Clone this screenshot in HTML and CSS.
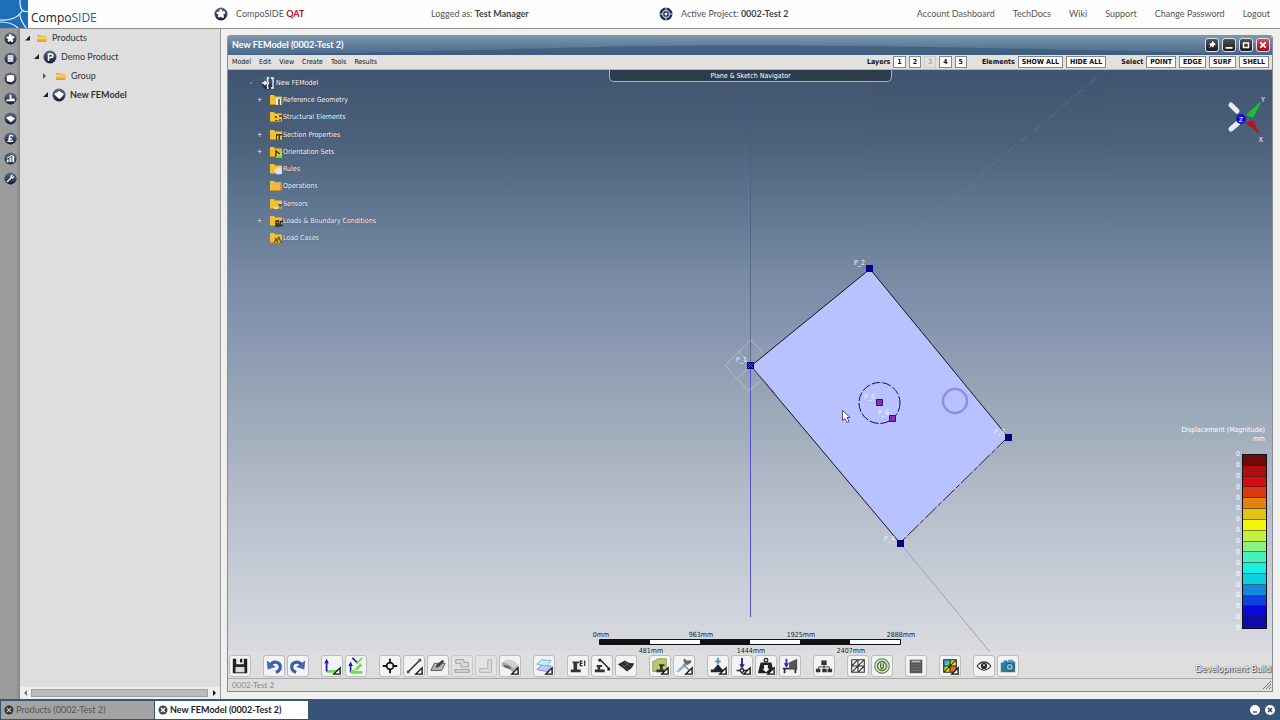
FILE: index.html
```html
<!DOCTYPE html>
<html lang="en">
<head>
<meta charset="utf-8">
<title>CompoSIDE - New FEModel (0002-Test 2)</title>
<link rel="stylesheet" href="styles.css">
</head>
<body>
<svg class="defs" aria-hidden="true">
  <defs>
    <linearGradient id="navy" x2="0" y2="1"><stop offset="0" stop-color="#5b6d8c"/><stop offset="1" stop-color="#121d38"/></linearGradient>
    <linearGradient id="gold" x2="0" y2="1"><stop offset="0" stop-color="#fbe08a"/><stop offset="1" stop-color="#d99a1c"/></linearGradient>
    <symbol id="disc" viewBox="0 0 14 14"><circle cx="7" cy="7" r="6.5" fill="url(#navy)"/></symbol>
    <symbol id="folder" viewBox="0 0 12 10"><path d="M1 2h4l1 1h4v2H1z" fill="#e8b53e"/><path d="M1 9V3.500L3 4h9l-2 5z" fill="url(#gold)"/></symbol>
    <symbol id="ffolder" viewBox="0 0 13 12"><path d="M0 1h4l1 1.500h7V11H0z" fill="#f2c12e"/><path d="M0 10h12v1H0z" fill="#c8921a"/></symbol>
    <symbol id="cross" viewBox="0 0 14 14"><circle cx="7" cy="7" r="6.500" fill="url(#navy)"/><path d="M6 2.500c1.500-.8 2.500.5 2 2 1.500-.5 3.500 0 3.200 1.500-.2 1.200-1.500 1.200-2.200 1.500 1 .8 1.500 2.500.3 3.200-1.200.7-2-.5-2.300-1.200-.8 1-2.500 1.300-3 .3-.5-1 .3-1.600 1-2.300-1.300 0-2.700-.6-2.500-1.800.3-1.300 2-1 3-.7-.3-.8-.5-2 .5-2.500z" fill="#fff"/></symbol>
  </defs>
</svg>

<header class="top">
  <div class="brand">
    <svg class="logo" viewBox="0 0 28 28" aria-hidden="true"><path fill="#1d70b7" d="M0 0h28v28H0z"/><path d="M0 20C9 21 18 18 22 11M20 0c0 5 0 8 2 10 2 2 4 2 6 1M20 15c0 5 3 8 6 13M0 22c6 0 13 1 18 6" fill="none" stroke="#e9f2fa" stroke-width="1.200"/></svg>
    <span class="wordmark">Compo<b>SIDE</b></span>
  </div>
  <div class="info"><svg class="i14" aria-hidden="true"><use href="#cross"/></svg><span>CompoSIDE <b class="red">QAT</b></span></div>
  <div class="info plain"><span>Logged as: <b>Test Manager</b></span></div>
  <div class="info project"><svg class="i14" viewBox="0 0 14 14" aria-hidden="true"><circle cx="7" cy="7" r="6.500" fill="#1b2747"/><circle cx="7" cy="7" r="3.500" fill="none" stroke="#9fb2d4" stroke-width="1.500"/><path d="M7 0v4M7 10v4M0 7h4M10 7h4" stroke="#d5dff0"/><circle cx="7" cy="7" r="1.500" fill="#fff"/></svg><span>Active Project: <b>0002-Test 2</b></span></div>
  <nav class="links"><a href="#">Account Dashboard</a><a href="#">TechDocs</a><a href="#">Wiki</a><a href="#">Support</a><a href="#">Change Password</a><a href="#">Logout</a></nav>
</header>

<main class="main">
  <nav class="rail" aria-label="Modules">
    <button aria-label="Modules"><svg viewBox="0 0 14 14"><use href="#cross"/></svg></button>
    <button aria-label="Materials"><svg viewBox="0 0 14 14"><use href="#disc"/><path d="M4 3.500h6v7H4z" fill="#fff"/><path d="M4 5.500h6M4 8.500h6" stroke="#8893aa"/></svg></button>
    <button aria-label="Laminates"><svg viewBox="0 0 14 14"><use href="#disc"/><path d="M3 4l5-1 3 1v5l-3 2-5-1z" fill="#fff"/></svg></button>
    <button aria-label="Sections"><svg viewBox="0 0 14 14"><use href="#disc"/><path d="M6 3h2v4h3l1 3H2l1-2h3z" fill="#fff"/></svg></button>
    <button aria-label="Models"><svg viewBox="0 0 14 14"><use href="#disc"/><path d="M2 6l5-2 5 3-3 3-2 1z" fill="#fff"/></svg></button>
    <button aria-label="Costs"><svg viewBox="0 0 14 14"><use href="#disc"/><path d="M9.500 5c-.5-2-4-2-3.500 1 .4 2 .3 3-1 4h5M4.500 7.200h4" fill="none" stroke="#fff" stroke-width="1.500"/></svg></button>
    <button aria-label="Reports"><svg viewBox="0 0 14 14"><use href="#disc"/><path d="M3 11V8h2v3zM6 11V6h2v5zM9 11V4h2v7zM3 6l6-3v1L3 7z" fill="#fff"/></svg></button>
    <button aria-label="Settings"><svg viewBox="0 0 14 14"><use href="#disc"/><path d="M3 10l4-4c-.5-2 1-3.500 3-3L8.500 4.500l1 1L11 4c.5 2-1 3.500-3 3l-4 4c-.8.500-1.500-.3-1-1z" fill="#fff"/></svg></button>
  </nav>

  <aside class="side">
    <ul class="products">
      <li class="d0"><i class="open"></i><svg class="fold" aria-hidden="true"><use href="#folder"/></svg>Products</li>
      <li class="d1"><i class="open"></i><svg class="i14" viewBox="0 0 14 14" aria-hidden="true"><use href="#disc"/><path d="M5.500 11V4H8c2.500 0 2.500 3.500 0 3.500H6" fill="none" stroke="#fff" stroke-width="1.500"/></svg>Demo Product</li>
      <li class="d2"><i class="closed"></i><svg class="fold" aria-hidden="true"><use href="#folder"/></svg>Group</li>
      <li class="d2 model"><i class="open"></i><svg class="i14" viewBox="0 0 14 14" aria-hidden="true"><use href="#disc"/><path d="M2 6l5-3 5 3-3 4-2 1z" fill="#fff"/></svg><b>New FEModel</b></li>
    </ul>
    <div class="hscroll"><span class="arrow left"></span><span class="thumb"></span><span class="arrow right"></span></div>
  </aside>

  <section class="desk">
    <div class="window">
      <div class="titlebar">
        <svg class="sheen" viewBox="0 0 1044 18" preserveAspectRatio="none" aria-hidden="true"><path d="M0 18C250 15 350 9 500 9s280 2 544 9z" fill="#395a7d"/></svg>
        <h1>New FEModel (0002-Test 2)</h1>
        <div class="winbtns">
          <button aria-label="Pin"><svg viewBox="0 0 12 12"><path d="M6.500 2l3.500 3.500-1.500.5-1.500 2.500L5.500 7 3 9.500 4.500 6.500 3 5l2.500-1z" fill="#fff"/></svg></button>
          <button aria-label="Minimise"><svg viewBox="0 0 12 12"><path d="M2.500 8h7v1.700h-7z" fill="#fff"/></svg></button>
          <button aria-label="Maximise"><svg viewBox="0 0 12 12"><path d="M3.500 4h5v4.500h-5z" fill="none" stroke="#fff" stroke-width="1.500"/></svg></button>
          <button class="close" aria-label="Close"><svg viewBox="0 0 12 12"><path d="M3.300 3.300l5.400 5.400M8.700 3.300L3.300 8.700" stroke="#fff" stroke-width="1.800"/></svg></button>
        </div>
      </div>

      <div class="menubar">
        <div class="menus"><button>Model</button><button>Edit</button><button>View</button><button>Create</button><button>Tools</button><button>Results</button></div>
        <div class="filters">
          <b>Layers</b><button>1</button><button>2</button><button disabled>3</button><button>4</button><button>5</button>
          <b class="gap">Elements</b><button>SHOW ALL</button><button>HIDE ALL</button>
          <b class="gap">Select</b><button>POINT</button><button>EDGE</button><button>SURF</button><button>SHELL</button>
        </div>
      </div>

      <div class="view">
        <svg class="scene" viewBox="228 70 1044 581" role="img" aria-label="Model view">
          <path d="M750.500 102V365" stroke="#465a80" opacity=".65"/>
          <path d="M750.500 365V617" stroke="#5550c8"/>
          <path d="M869 269L1106 70" stroke="#5d9a90" stroke-dasharray="9 3 2 4" opacity=".45"/>
          <path d="M900 543L990 652" stroke="#a5a3a0"/>
          <path d="M870 269L1008 437 900 543 751 366z" fill="#b8c2ff"/>
          <path d="M900 543L751 366 870 269 1008 437" fill="none" stroke="#10142c"/>
          <path d="M1008 437L900 543" stroke="#20243c" stroke-dasharray="16 2 5 2"/>
          <path d="M751 366l24 27" stroke="#b5648c" opacity=".7"/>
          <path d="M725 365l26-25 12 13M725 365l23 26 13-10M738 378l12-11M738 350l12 15" fill="none" stroke="#c9cdc9" opacity=".6"/>
          <circle cx="879.500" cy="403" r="20.500" fill="none" stroke="#15152c" stroke-dasharray="9 2"/>
          <circle cx="955" cy="401" r="12" fill="none" stroke="#8e8cec" stroke-width="2.500"/>
          <g class="plabel"><text x="854" y="265">P_2</text><text x="736" y="362">P_1</text><text x="884" y="541">P_4</text><text x="994" y="434">P_3</text><text x="864" y="399">P_5</text><text x="878" y="415">P_6</text></g>
          <path d="M866 265h7v7h-7zM747 362h7v7h-7zM897 540h7v7h-7zM1005 434h7v7h-7z" fill="#00008c"/>
          <path d="M748 363l5 5M753 363l-5 5" stroke="#8c92e4" opacity=".6"/>
          <path d="M876.500 399.500h6v6h-6zM889.500 415.500h6v6h-6z" fill="#8b2cc0" stroke="#390d66"/>
          <path d="M842.500 410.500v10l2.500-2 2 4 2-1-2-4h3z" fill="#fff" stroke="#333" stroke-width=".8"/>
          <g class="scale"><path d="M599.500 639.500h301v5h-301z" fill="#fff" stroke="#111"/><path d="M600 639h50v6h-50zM700 639h50v6h-50zM800 639h50v6h-50z" fill="#111"/>
            <text x="601" y="637">0mm</text><text x="701" y="637">963mm</text><text x="801" y="637">1925mm</text><text x="901" y="637">2888mm</text><text x="651" y="653">481mm</text><text x="751" y="653">1444mm</text><text x="851" y="653">2407mm</text></g>
        </svg>

        <ul class="ftree">
          <li class="root"><span>-</span><svg viewBox="0 0 14 14" aria-hidden="true"><use href="#disc"/><path d="M1 7h4M3.500 5L5.500 7 3.500 9M8 2H6.500v3l1 2-1 2v3H8M10 2h2v10h-2" fill="none" stroke="#fff" stroke-width="1.300"/></svg>New FEModel</li>
          <li><span>+</span><svg viewBox="0 0 13 12" aria-hidden="true"><use href="#ffolder"/><path d="M6 4h6v7H6z" fill="#eee"/><path d="M9 11V5" stroke="#533" stroke-width="1.500"/><path d="M11 4h1.500v7H11z" fill="#62b82e"/></svg>Reference Geometry</li>
          <li><span></span><svg viewBox="0 0 13 12" aria-hidden="true"><use href="#ffolder"/><path d="M5 5h2v2H5zM9 4h3v2H9zM5 9h3v1H5zM9 8h2v2H9z" fill="#7c4b12"/></svg>Structural Elements</li>
          <li><span>+</span><svg viewBox="0 0 13 12" aria-hidden="true"><use href="#ffolder"/><path d="M6 5h6v1.500H10V11H8.500V6.500H7V11H6z" fill="#4d3813"/></svg>Section Properties</li>
          <li><span>+</span><svg viewBox="0 0 13 12" aria-hidden="true"><use href="#ffolder"/><path d="M6 11V5l4 3" fill="none" stroke="#4d3813" stroke-width="1.500"/><path d="M9 4h3v1.500H9zM6 10h6v2H6z" fill="#72dc20"/></svg>Orientation Sets</li>
          <li><span></span><svg viewBox="0 0 13 12" aria-hidden="true"><use href="#ffolder"/><path d="M4 7l6-3 2 1v6l-5 .5z" fill="#dfe1e4"/></svg>Rules</li>
          <li><span></span><svg viewBox="0 0 13 12" aria-hidden="true"><use href="#ffolder"/><path d="M3 2.500h7V10H3z" fill="#f5b352"/><path d="M11 3v8" stroke="#ad6a13"/></svg>Operations</li>
          <li><span></span><svg viewBox="0 0 13 12" aria-hidden="true"><use href="#ffolder"/><path d="M8 6h4v2l-2 2z" fill="#576074"/><path d="M4 9h4v2H4z" fill="#dedede"/></svg>Sensors</li>
          <li><span>+</span><svg viewBox="0 0 13 12" aria-hidden="true"><use href="#ffolder"/><path d="M6 6v5h3V9H6V6h2.500v2M13 6.500h-2.500v4H13" fill="none" stroke="#2d240d" stroke-width="1.300"/></svg>Loads &amp; Boundary Conditions</li>
          <li><span></span><svg viewBox="0 0 13 12" aria-hidden="true"><use href="#ffolder"/><path d="M4 10l6-5M8 5l4 6M5 6l3 4" stroke="#66583a" stroke-width="1.500"/></svg>Load Cases</li>
        </ul>

        <button class="navigator">Plane &amp; Sketch Navigator</button>

        <svg class="triad" viewBox="0 0 44 50" aria-hidden="true">
          <path d="M5 10l6 6M5 34l7-6" stroke="#e8ebf2" stroke-width="5" stroke-linecap="round"/>
          <path d="M20 20l14-13 1 1-8 15z" fill="#1fbd2d"/><path d="M19 28l8-3 7 14z" fill="#b01724"/>
          <circle cx="15" cy="24" r="5" fill="#1010d0"/>
          <text x="15" y="27" text-anchor="middle">Z</text><text x="37" y="7" text-anchor="middle">Y</text><text x="35" y="47" text-anchor="middle">X</text>
        </svg>

        <div class="legend">
          <p>Displacement (Magnitude)<br>mm</p>
          <div class="ramp">
            <div class="vals"><span>0</span><span>0</span><span>0</span><span>0</span><span>0</span><span>0</span><span>0</span><span>0</span><span>0</span><span>0</span><span>0</span><span>0</span><span>0</span><span>0</span><span>0</span><span>0</span><span>0</span></div>
            <div class="bar"><i class="c1"></i><i class="c2"></i><i class="c3"></i><i class="c4"></i><i class="c5"></i><i class="c6"></i><i class="c7"></i><i class="c8"></i><i class="c9"></i><i class="c10"></i><i class="c11"></i><i class="c12"></i><i class="c13"></i><i class="c14"></i><i class="c15"></i><i class="c16"></i></div>
          </div>
        </div>
      </div>

      <div class="tools">
        <div><button aria-label="Save"><svg viewBox="0 0 20 20"><path d="M2 2h4v6h8V2h4v16H2z" fill="#222"/><path d="M5 11h10v6H5z" fill="#ddd"/><path d="M6 2h8v5H6z" fill="#e8e8e8"/><path d="M10 2h2.500v4H10z" fill="#222"/></svg></button></div>
        <div><button aria-label="Undo"><svg viewBox="0 0 20 20"><path d="M6 9c3-5 11-4 11 2 0 3-2 5-5 6" fill="none" stroke="#3a5ca9" stroke-width="3.500"/><path d="M2 4l1 10 9-3z" fill="#4268b5"/></svg></button><button aria-label="Redo"><svg viewBox="0 0 20 20"><path d="M14 9C11 4 3 5 3 11c0 3 2 5 5 6" fill="none" stroke="#3a5ca9" stroke-width="3.500"/><path d="M18 4l-1 10-9-3z" fill="#4268b5"/></svg></button></div>
        <div><button aria-label="Axes"><svg viewBox="0 0 20 20"><path d="M4 16h12" stroke="#68e052" stroke-width="3"/><path d="M4 16V6" stroke="#1d1aa5" stroke-width="2"/><path d="M1.500 7L4 2l2.500 5z" fill="#1d1aa5"/><path d="M19 12v7h-7z" class="corner"/></svg></button><button aria-label="Local axes"><svg viewBox="0 0 20 20"><path d="M4 17h13M10 14l6-6" stroke="#68e052" stroke-width="3"/><path d="M4 17V8M6 1l6 6" fill="none" stroke="#1d1aa5" stroke-width="1.800"/><path d="M11 7l6-6M4 16l5-1" stroke="#70e45a" stroke-width="2"/><path d="M1.500 10L4 5l2.500 5z" fill="#1d1aa5"/></svg></button></div>
        <div><button aria-label="Point"><svg viewBox="0 0 20 20"><circle cx="10" cy="10" r="3.800" fill="none" stroke="#111" stroke-width="1.800"/><path d="M10 2v5M10 13v5M2 10h5M13 10h5" stroke="#111" stroke-width="2"/></svg></button><button aria-label="Line"><svg viewBox="0 0 20 20"><path d="M3 17L17 3" stroke="#333" stroke-width="1.700"/><path d="M2 15h3v3H2zM15 2h3v3h-3z" fill="#555"/><path d="M19 12v7h-7z" class="corner"/></svg></button><button aria-label="Surface"><svg viewBox="0 0 20 20"><path d="M2 15L6 7h12l-4 8z" fill="#b4b4b4" stroke="#555"/><path d="M7 12l2-4 6-5 2 2-6 6z" fill="#444"/></svg></button><button disabled aria-label="Offset"><svg viewBox="0 0 20 20"><path d="M3 3h9v3h5v5H9V7H3zM2 14h16v3H2z" fill="#ddd" stroke="#999"/></svg></button><button disabled aria-label="Trim"><svg viewBox="0 0 20 20"><path d="M12 3h4v14H3v-4h9z" fill="#ddd" stroke="#aaa"/></svg></button><button aria-label="Solid"><svg viewBox="0 0 20 20"><path d="M1 6l6-3c5 0 10 3 12 6v6l-5 3-4-4-9-4z" fill="#a6adb3"/><path d="M1 6l6-3c5 0 10 3 12 6l-5 4C11 9 6 6 1 6z" fill="#cdd2d6"/><path d="M3 9c4 0 6 1 8 3v2c-2-1-5-2-8-3z" fill="#61686e"/><path d="M19 12v7h-7z" class="corner"/></svg></button></div>
        <div><button aria-label="Planes"><svg viewBox="0 0 20 20"><path d="M2 14l5-5 11 1-5 6z" fill="#c1cdf8" stroke="#7182d5"/><path d="M2 8l5-5 11 1-5 6z" fill="#cbeaf9" stroke="#70a9d5"/><path d="M19 12v7h-7z" class="corner"/></svg></button></div>
        <div><button aria-label="Beam stiffness"><svg viewBox="0 0 20 20"><path d="M4 5h7v2H9v7h4v3H2v-3h3V7H4z" fill="#333"/><path d="M15 4.500h-2.500v5H15M12.500 7H15M17.500 4v6" fill="none" stroke="#222" stroke-width="1.300"/></svg></button><button aria-label="Beam direction"><svg viewBox="0 0 20 20"><path d="M4 9h6v2H8v3h5v3H2v-3h3v-3H4z" fill="#333"/><path d="M8 3l10 10" stroke="#222" stroke-width="1.500"/><path d="M6 2h3v3H6zM16 12h3v3h-3z" fill="#222"/></svg></button><button aria-label="Mesh surface"><svg viewBox="0 0 20 20"><path d="M1 8l8-4c3 3 6 3 10 3-1 4-4 7-8 9C8 13 5 11 1 8z" fill="#282828"/><path d="M4 7l9 7M8 6l8 5M5 12l9-5" stroke="#777" stroke-width=".7"/></svg></button></div>
        <div><button aria-label="Assign section"><svg viewBox="0 0 20 20"><path d="M2 5l3-1 2-2h10v12l-2 2H2z" fill="#b8c86b" stroke="#8d9e4d"/><path d="M9 8h6v2h-2v4h2v3H6v-3h4v-4H9z" fill="#333"/><path d="M19 12v7h-7z" class="corner"/></svg></button><button aria-label="Edit"><svg viewBox="0 0 20 20"><path d="M3 16L12 8" stroke="#7bb8df" stroke-width="3"/><path d="M9 3l2-1 2 2h4l1-1v3l-4 3-3-1z" fill="#666"/><path d="M9 8l7 7" stroke="#888" stroke-width="1.500"/><path d="M1 17l3-4 3 2z" fill="#bcc4cc"/><path d="M19 12v7h-7z" class="corner"/></svg></button></div>
        <div><button aria-label="Support"><svg viewBox="0 0 20 20"><path d="M10 1v7M7 5h6" stroke="#4b93d2" stroke-width="2"/><path d="M10 8l5 6h3v3H2v-3h3z" fill="#252525"/><path d="M19 12v7h-7z" class="corner"/></svg></button><button aria-label="Force"><svg viewBox="0 0 20 20"><path d="M10 1v8" stroke="#251d9b" stroke-width="2"/><path d="M7 8h6l-3 5z" fill="#251d9b"/><circle cx="10" cy="15" r="2" fill="none" stroke="#222" stroke-width="1.500"/><path d="M4 15h4M12 15h4M10 17v2" stroke="#222" stroke-width="1.500"/><path d="M19 12v7h-7z" class="corner"/></svg></button><button aria-label="Gravity"><svg viewBox="0 0 20 20"><circle cx="10" cy="3.500" r="2" fill="none" stroke="#222" stroke-width="1.500"/><path d="M4 6h12l3 12H1z" fill="#222"/><path d="M8 9h4v4h2l-4 4-4-4h2z" fill="#fff"/><path d="M19 12v7h-7z" class="corner"/></svg></button><button aria-label="Pressure"><svg viewBox="0 0 20 20"><path d="M2 12h16v2H2zM3 14h2v4H3zM15 14h2v4h-2z" fill="#333"/><path d="M9 6l9-4v11H9z" fill="#555"/><path d="M6 2v6" stroke="#3b2fa5" stroke-width="2"/><path d="M3 7h6l-3 5z" fill="#3b2fa5"/></svg></button></div>
        <div><button aria-label="Hierarchy"><svg viewBox="0 0 20 20"><path d="M7 4h6v5H7zM1 13h5v4H1zM8 13h5v4H8zM14 13h5v4h-5z" fill="#333"/><path d="M10 8v5M4 13v-2h12v2" fill="none" stroke="#333"/></svg></button></div>
        <div><button aria-label="Mesh"><svg viewBox="0 0 20 20"><path d="M3 3h14v14H3zM10 3v14M3 10h14M3 10l7-7M3 17L17 3M10 17l7-7" fill="none" stroke="#333" stroke-width="1.200"/></svg></button><button aria-label="Solve"><svg viewBox="0 0 20 20"><circle cx="10" cy="10" r="8" fill="none" stroke="#6c9154" stroke-width="1.500"/><circle cx="10" cy="10" r="5" fill="none" stroke="#5d8842" stroke-width="2"/><path d="M8.500 7v4c0 2 3 2 3 0V7" fill="none" stroke="#456c31" stroke-width="1.500"/></svg></button></div>
        <div><button aria-label="Calculator"><svg viewBox="0 0 20 20"><path d="M3 3h14v15H3z" fill="#555"/><path d="M5 4h10v2H5z" fill="#b4bbbb"/><path d="M5 9h10M5 12h10M5 15h10" stroke="#777"/></svg></button></div>
        <div><button aria-label="Contours"><svg viewBox="0 0 20 20"><path d="M3 3h14v14H3z" fill="#e8df22"/><path d="M3 3h7v7H3z" fill="#37a5df"/><path d="M10 3h4L3 15v-5z" fill="#70d950"/><path d="M10 10h7v7h-7z" fill="#e56d24"/><path d="M3 3h14v14H3zM10 3v14M3 10h14M3 17L17 3" fill="none" stroke="#282828" stroke-width="1.200"/><path d="M19 12v7h-7z" class="corner"/></svg></button></div>
        <div><button aria-label="Visibility"><svg viewBox="0 0 20 20"><path d="M2.500 10c4-6 11-6 15 0-4 6-11 6-15 0z" fill="#fff" stroke="#444" stroke-width="1.500"/><circle cx="10" cy="10" r="3.500" fill="#333"/><circle cx="10" cy="9" r="1" fill="#fff"/></svg></button><button aria-label="Snapshot"><svg viewBox="0 0 20 20"><path d="M2 6h3V4h4v1h9v12H2z" fill="#327b9b"/><path d="M10 3h6v3h-6z" fill="#54a2bd"/><circle cx="12" cy="11" r="4" fill="#9bc8d9" stroke="#205a78" stroke-width="1.500"/><circle cx="12" cy="11" r="1.500" fill="#28688b"/></svg></button></div>
        <span class="build">Development Build</span>
      </div>
      <div class="status"><span>0002-Test 2</span><svg viewBox="0 0 8 8" aria-hidden="true"><path d="M0 8l8-8M3 8l5-5M6 8l2-2" stroke="#777"/></svg></div>
    </div>
  </section>
</main>

<footer class="taskbar">
  <div class="tab"><button aria-label="Close tab"><svg viewBox="0 0 10 10"><circle cx="5" cy="5" r="4.500" fill="#333"/><path d="M3 3l4 4M7 3L3 7" stroke="#bbb" stroke-width="1.300"/></svg></button><span>Products (0002-Test 2)</span></div>
  <div class="tab active"><button aria-label="Close tab"><svg viewBox="0 0 10 10"><circle cx="5" cy="5" r="4.500" fill="#444"/><path d="M3 3l4 4M7 3L3 7" stroke="#fff" stroke-width="1.300"/></svg></button><b>New FEModel (0002-Test 2)</b></div>
  <div class="taskbtns"><button aria-label="Minimise all"><svg viewBox="0 0 10 10"><circle cx="5" cy="5" r="5" fill="#fff"/><path d="M3 7h4" stroke="#29405f" stroke-width="1.300"/></svg></button><button aria-label="Close all"><svg viewBox="0 0 10 10"><circle cx="5" cy="5" r="5" fill="#fff"/><path d="M3 3l4 4M7 3L3 7" stroke="#29405f" stroke-width="1.500"/></svg></button></div>
</footer>
</body>
</html>
```

FILE: styles.css
```css
* { box-sizing: border-box; }
body { margin: 0; height: 100vh; display: flex; flex-direction: column; background: #efefee; color: #333; font: 9px/12px Lato, "Open Sans", sans-serif; overflow: hidden; }
button { font: inherit; color: inherit; padding: 0; margin: 0; border: 0; background: none; }
svg { display: block; flex: none; }
ul { margin: 0; padding: 0; list-style: none; }
.defs { position: absolute; width: 0; height: 0; }
.i14 { width: 14px; height: 14px; }

.top { height: 29px; flex: none; display: grid; grid-template-columns: 214px 217px 228px 180px 1fr; align-items: center; background: #fefefe; border-bottom: 1px solid #8f908c; color: #555; }
.brand { display: flex; align-items: center; gap: 3px; height: 28px; }
.logo { width: 28px; height: 28px; }
.wordmark { font: 12px/16px "Open Sans", sans-serif; padding-top: 7px; color: #222; }
.wordmark b { font-weight: 400; color: #2c5f8c; }
.info { display: flex; align-items: center; gap: 8px; white-space: nowrap; }
.info b { color: #444; }
.info .red { color: #b5122b; }
.links { display: flex; justify-content: flex-end; gap: 18px; padding-right: 10px; white-space: nowrap; }
.links a { color: #555; text-decoration: none; }

.main { flex: 1; min-height: 0; display: flex; }
.rail { width: 20px; flex: none; padding-top: 3px; display: flex; flex-direction: column; gap: 7px; align-items: center; background: linear-gradient(90deg, #9c9c9c 16px, #858585); }
.rail svg { width: 13px; height: 13px; }
.side { width: 201px; flex: none; display: flex; flex-direction: column; justify-content: space-between; background: #dedede; border-right: 1px solid #999; }
.products li { display: flex; align-items: center; gap: 4px; height: 19px; }
.products .d0 { padding-left: 5px; height: 18px; }
.products .d1 { padding-left: 14px; }
.products .d2 { padding-left: 23px; }
.products i { width: 5px; height: 5px; margin-right: 2px; }
.open { background: #222; clip-path: polygon(100% 0, 100% 100%, 0 100%); }
.closed { border: 3px solid transparent; border-left-color: #555; }
.products .d1 i, .products .model i { margin-right: 0; }
.fold { width: 12px; height: 10px; }
.hscroll { height: 12px; padding: 0 4px; display: flex; align-items: center; justify-content: space-between; background: #eee; }
.thumb { flex: 1; height: 8px; margin: 0 5px 0 4px; background: #bbb; border: 1px solid #a0a0a0; }
.arrow { border: 3px solid transparent; width: 3px; }
.arrow.left { border-left: 0; border-right-color: #777; }
.arrow.right { border-right: 0; border-left-color: #111; }

.desk { flex: 1; min-width: 0; padding: 6px 7px 7px 6px; display: flex; }
.window { flex: 1; min-width: 0; display: flex; flex-direction: column; border: 1px solid #8a8e92; border-radius: 3px 3px 0 0; background: #dedede; overflow: hidden; font-family: "DejaVu Sans Condensed", sans-serif; font-size: 7px; line-height: 10px; }
.titlebar { position: relative; height: 19px; flex: none; display: flex; align-items: center; justify-content: space-between; padding: 0 2px 2px 4px; background: linear-gradient(#7f97ae, #5b7898 60%, #486788); color: #fff; }
.sheen { position: absolute; inset: 0; width: 100%; height: 100%; opacity: .7; }
.titlebar h1 { position: relative; margin: 0; font: 700 9px/12px Lato, sans-serif; }
.winbtns { position: relative; display: flex; gap: 3px; }
.winbtns button { width: 14px; height: 14px; border: 1px solid #dde2e8; border-radius: 3px; background: linear-gradient(#555, #15181d); }
.winbtns .close { background: linear-gradient(#d94a60, #9c0a24); }
.winbtns svg { width: 12px; height: 12px; }

.menubar { height: 15px; flex: none; display: flex; justify-content: space-between; align-items: center; padding: 0 3px 0 4px; background: #e2e1df; border-bottom: 1px solid #b5b5b5; color: #111; white-space: nowrap; }
.menus { display: flex; gap: 8px; }
.filters { display: flex; align-items: center; gap: 3px; font-weight: 700; }
.filters .gap { margin-left: 12px; }
.filters button { height: 12px; padding: 0 3px; background: #fff; border: 1px solid #888; line-height: 10px; }
.filters button:disabled { background: #e2e1df; color: #888; border-color: #ccc; font-weight: 400; }

.view { position: relative; flex: 1; min-height: 0; background: linear-gradient(#40546f, #4b617a 12%, #5f7690 23%, #7b8ca6 37%, #8b99b3 47%, #9ba9b8 59%, #b0b6c5 70%, #c4cad4 85%, #dadbe0); color: #fff; }
.scene { position: absolute; inset: 0; width: 100%; height: 100%; overflow: visible; pointer-events: none; }
.plabel { fill: #f2f4ff; }
.scale { fill: #222; text-anchor: middle; }
.ftree { position: absolute; left: 20px; top: 4px; height: 173px; display: grid; grid-auto-rows: 1fr; text-shadow: 0 0 1px #1c2b40; white-space: nowrap; }
.ftree li { display: flex; align-items: center; padding-left: 9px; }
.ftree .root { padding-left: 0; gap: 1px; }
.ftree span { width: 13px; }
.ftree .root span { width: 12px; padding-left: 2px; }
.ftree svg { width: 13px; height: 12px; }
.ftree .root svg { width: 14px; height: 14px; }
.navigator { position: absolute; left: 50%; top: 0; width: 283px; height: 12px; margin-left: -141px; line-height: 12px; background: #2d3c4b; border: 1px solid #aab4be; border-top: 0; border-radius: 0 0 5px 5px; }
.triad { position: absolute; right: 2px; top: 25px; width: 44px; height: 50px; }
.triad text { fill: #fff; }
.legend { position: absolute; right: 5px; bottom: 22px; text-align: right; line-height: 9px; }
.legend p { margin: 0 2px 10px 0; }
.ramp { display: flex; justify-content: flex-end; gap: 2px; }
.vals { display: flex; flex-direction: column; justify-content: space-between; margin: -4px 0; }
.bar { width: 25px; height: 175px; display: flex; flex-direction: column; border: 1px solid #111; }
.bar i { flex: 1; border-bottom: 1px solid #2228; }
.c1 { background: #6c0a0c; } .c2 { background: #b00d12; } .c3 { background: #d70b10; } .c4 { background: #d93a10; }
.c5 { background: #e28310; } .c6 { background: #e0c517; } .c7 { background: #f2f50c; } .c8 { background: #c4f043; }
.c9 { background: #8df083; } .c10 { background: #43f2bd; } .c11 { background: #17efe3; } .c12 { background: #0ccfe3; }
.c13 { background: #1687dc; } .c14 { background: #103fe0; } .c15 { background: #0808da; } .c16 { background: #0d0ab0; }

.tools { flex: none; display: flex; gap: 12px; padding: 4px 1px 1px; }
.tools div { display: flex; gap: 2px; }
.tools button { width: 22px; height: 22px; padding: 1px; border: 1px solid #bbb; border-radius: 3px; background: #f3f3f3; }
.tools button:disabled { background: #e3e3e3; border-color: #c9c9c9; }
.tools svg { width: 18px; height: 18px; }
.corner { fill: #fff; stroke: #111; stroke-width: 1.5; }
.build { margin-left: auto; align-self: center; padding-top: 6px; color: #fff; font: 9px/10px Lato, sans-serif; text-shadow: 1px 1px 1px #333, 0 0 1px #333; white-space: nowrap; }
.status { height: 13px; flex: none; display: flex; justify-content: space-between; align-items: center; padding: 0 1px 0 4px; border-top: 1px solid #aaa; color: #888; font: 8px/10px Lato, sans-serif; }
.status svg { width: 8px; height: 8px; }

.taskbar { height: 21px; flex: none; display: flex; align-items: center; gap: 1px; padding: 1px 5px 1px 1px; background: #375478; border-top: 1px solid #4d555e; }
.tab { width: 153px; height: 18px; display: flex; align-items: center; gap: 2px; padding-left: 3px; background: #a3a3a3; color: #555; white-space: nowrap; }
.tab.active { background: #fff; color: #222; }
.tab svg, .taskbtns svg { width: 10px; height: 10px; }
.taskbtns { margin-left: auto; display: flex; gap: 5px; }
```
